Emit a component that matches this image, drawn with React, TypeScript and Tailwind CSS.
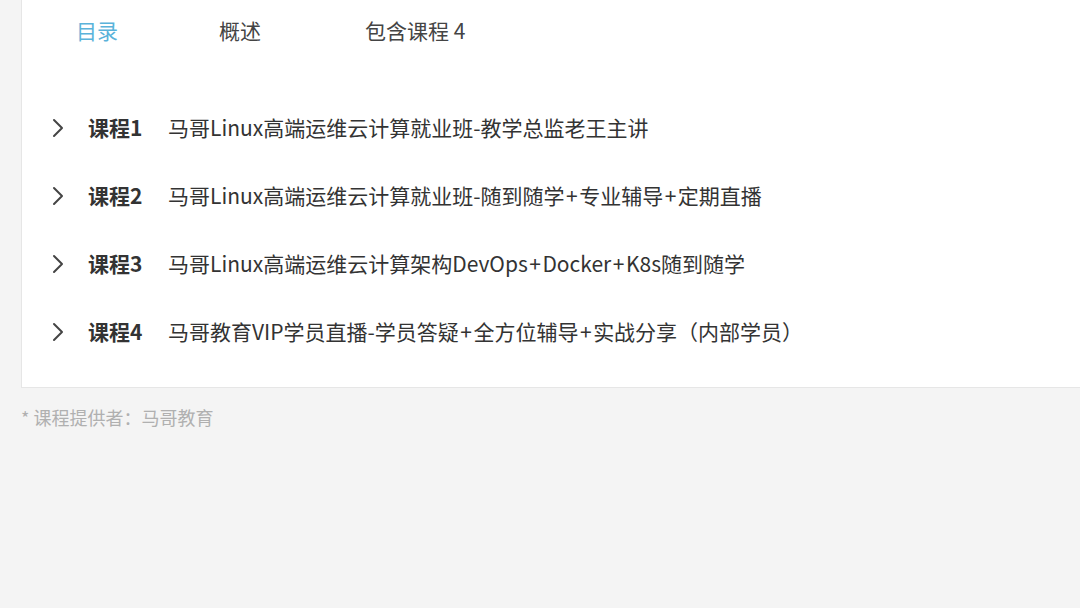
import React from "react";

const rows = [
  { label: "课程1", title: "马哥Linux高端运维云计算就业班-教学总监老王主讲" },
  { label: "课程2", title: "马哥Linux高端运维云计算就业班-随到随学+专业辅导+定期直播" },
  { label: "课程3", title: "马哥Linux高端运维云计算架构DevOps+Docker+K8s随到随学" },
  { label: "课程4", title: "马哥教育VIP学员直播-学员答疑+全方位辅导+实战分享（内部学员）" },
];

function Chevron() {
  return (
    <svg width="14" height="20" viewBox="0 0 14 20" fill="none">
      <path d="M3 2 L11 10 L3 18" stroke="#444" strokeWidth="2" strokeLinecap="round" strokeLinejoin="round" />
    </svg>
  );
}

function Title({ text }: { text: string }) {
  const parts = text.split("+");
  return (
    <span className="text-[21px] text-[#333]">
      {parts.map((p, i) => (
        <React.Fragment key={i}>
          {i > 0 && <span className="mx-[1.5px]">+</span>}
          {p}
        </React.Fragment>
      ))}
    </span>
  );
}

export default function App() {
  return (
    <div
      className="w-[1080px] h-[608px] overflow-hidden bg-[#f4f4f4] pl-[21px]"
      style={{ fontFamily: '"Noto Sans CJK SC", "Noto Sans", sans-serif' }}
    >
      <div className="w-[1100px] bg-white border-l border-b border-[#e6e6e6]">
        <div className="h-[61px] flex items-center pl-[54px] text-[21px]">
          <span className="text-[#5ab3da] mr-[101px]">目录</span>
          <span className="text-[#444] mr-[104px]">概述</span>
          <span className="text-[#444]">包含课程 4</span>
        </div>
        <div className="pt-[33px] pb-[21px]">
          {rows.map((r) => (
            <div key={r.label} className="h-[68px] flex items-center pl-[29px]">
              <Chevron />
              <span className="ml-[23px] w-[80px] text-[21px] font-bold text-[#333]">{r.label}</span>
              <Title text={r.title} />
            </div>
          ))}
        </div>
      </div>
      <div className="mt-[16px] text-[18px] text-[#b0b0b0]">* 课程提供者：马哥教育</div>
    </div>
  );
}
